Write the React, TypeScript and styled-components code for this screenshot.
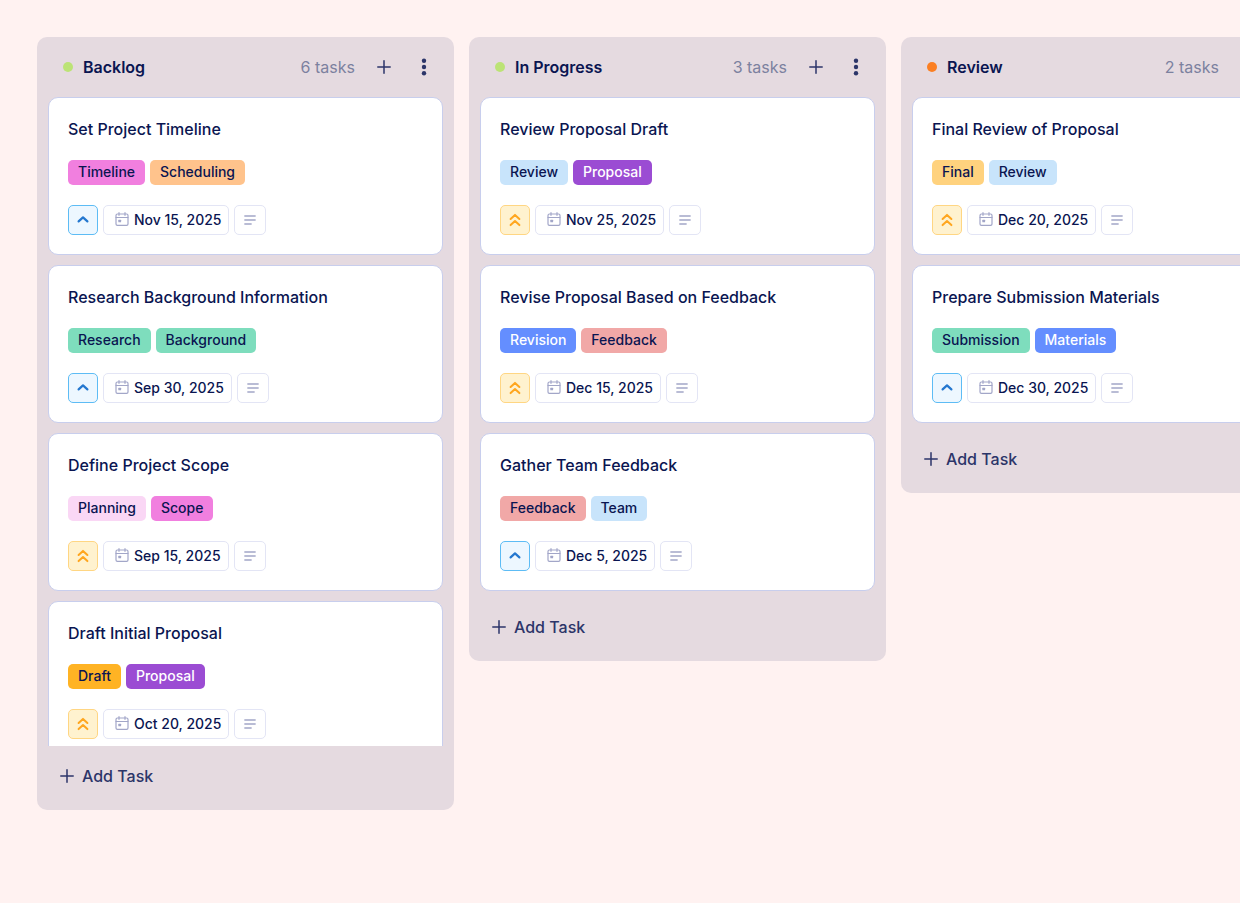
import React from "react";
import styled, { createGlobalStyle } from "styled-components";

const GlobalStyle = createGlobalStyle`
  *, *::before, *::after { box-sizing: border-box; }
  body {
    margin: 0;
    background: #fff2f1;
    color: #0a1551;
    font-family: Inter, "Liberation Sans", sans-serif;
    -webkit-font-smoothing: antialiased;
  }
  button { font: inherit; color: inherit; cursor: pointer; }
  h2, h3, ul { margin: 0; padding: 0; }
`;

type Priority = "medium" | "high";

const tagColors = {
  pink: ["#f17fdf", "#0a1551"],
  peach: ["#ffc38c", "#0a1551"],
  green: ["#7eddbd", "#0a1551"],
  blush: ["#fad7f5", "#0a1551"],
  amber: ["#ffb324", "#0a1551"],
  gold: ["#ffd27e", "#0a1551"],
  sky: ["#c8e4fb", "#0a1551"],
  coral: ["#f1a8a7", "#0a1551"],
  purple: ["#9b4cd3", "#ffffff"],
  blue: ["#648eff", "#ffffff"],
} as const;

type TagColor = keyof typeof tagColors;

interface Task {
  title: string;
  tags: [string, TagColor][];
  priority: Priority;
  due: string;
}

interface ColumnData {
  name: string;
  dot: string;
  count: number;
  tasks: Task[];
}

const columns: ColumnData[] = [
  {
    name: "Backlog",
    dot: "#bce376",
    count: 6,
    tasks: [
      { title: "Set Project Timeline", tags: [["Timeline", "pink"], ["Scheduling", "peach"]], priority: "medium", due: "Nov 15, 2025" },
      { title: "Research Background Information", tags: [["Research", "green"], ["Background", "green"]], priority: "medium", due: "Sep 30, 2025" },
      { title: "Define Project Scope", tags: [["Planning", "blush"], ["Scope", "pink"]], priority: "high", due: "Sep 15, 2025" },
      { title: "Draft Initial Proposal", tags: [["Draft", "amber"], ["Proposal", "purple"]], priority: "high", due: "Oct 20, 2025" },
    ],
  },
  {
    name: "In Progress",
    dot: "#bce376",
    count: 3,
    tasks: [
      { title: "Review Proposal Draft", tags: [["Review", "sky"], ["Proposal", "purple"]], priority: "high", due: "Nov 25, 2025" },
      { title: "Revise Proposal Based on Feedback", tags: [["Revision", "blue"], ["Feedback", "coral"]], priority: "high", due: "Dec 15, 2025" },
      { title: "Gather Team Feedback", tags: [["Feedback", "coral"], ["Team", "sky"]], priority: "medium", due: "Dec 5, 2025" },
    ],
  },
  {
    name: "Review",
    dot: "#fb7f23",
    count: 2,
    tasks: [
      { title: "Final Review of Proposal", tags: [["Final", "gold"], ["Review", "sky"]], priority: "high", due: "Dec 20, 2025" },
      { title: "Prepare Submission Materials", tags: [["Submission", "green"], ["Materials", "blue"]], priority: "medium", due: "Dec 30, 2025" },
    ],
  },
];

const Board = styled.main`
  display: flex;
  align-items: flex-start;
  gap: 15px;
  min-height: 100vh;
  padding: 37px;
  overflow-x: auto;
  scrollbar-width: none;
`;

const Column = styled.section`
  display: flex;
  flex-direction: column;
  flex: none;
  width: 417px;
  border-radius: 10px;
  background: #e5dae0;
`;

const ColumnHeader = styled.header`
  display: flex;
  align-items: center;
  height: 60px;
  padding: 0 15px 0 26px;
`;

const Dot = styled.span<{ $color: string }>`
  width: 10px;
  height: 10px;
  margin-right: 10px;
  border-radius: 50%;
  background: ${(p) => p.$color};
`;

const ColumnTitle = styled.h2`
  flex: 1;
  font-size: 16px;
  line-height: 24px;
  font-weight: 600;
`;

const Count = styled.span`
  margin-right: 14px;
  font-size: 16px;
  line-height: 24px;
  color: #7c819f;
`;

const HeaderActions = styled.div`
  display: flex;
  gap: 10px;
`;

const IconButton = styled.button`
  display: grid;
  place-items: center;
  width: 30px;
  height: 30px;
  padding: 0;
  border: 0;
  border-radius: 4px;
  background: transparent;
  color: #2c3569;
`;

const CardList = styled.ul`
  display: flex;
  flex-direction: column;
  gap: 10px;
  max-height: calc(100vh - 254px);
  padding: 0 11px 6px;
  overflow-y: auto;
  scrollbar-width: none;
  list-style: none;
`;

const Card = styled.li`
  display: flex;
  flex-direction: column;
  flex: none;
  gap: 20px;
  padding: 20px 19px 19px;
  border: 1px solid #c8ceed;
  border-radius: 10px;
  background: #ffffff;
`;

const CardTitle = styled.h3`
  font-size: 16px;
  line-height: 22px;
  font-weight: 500;
`;

const Row = styled.div`
  display: flex;
  gap: 5px;
`;

const Tag = styled.span<{ $color: TagColor }>`
  padding: 0 10px 1px;
  border-radius: 5px;
  font-size: 14px;
  line-height: 24px;
  font-weight: 500;
  background: ${(p) => tagColors[p.$color][0]};
  color: ${(p) => tagColors[p.$color][1]};
`;

const Chip = styled.button`
  display: flex;
  align-items: center;
  justify-content: center;
  gap: 5px;
  height: 30px;
  padding: 0 7px;
  border: 1px solid #e3e5f5;
  border-radius: 5px;
  background: #ffffff;
  color: #a2a6c8;
`;

const PriorityChip = styled(Chip)<{ $level: Priority }>`
  width: 30px;
  padding: 0;
  border-color: ${(p) => (p.$level === "high" ? "#ffd683" : "#5dbcf5")};
  background: ${(p) => (p.$level === "high" ? "#fff2cf" : "#edf7ff")};
  color: ${(p) => (p.$level === "high" ? "#ffa61f" : "#2477cf")};
`;

const DateChip = styled(Chip)`
  padding-left: 11px;
`;

const DateText = styled.span`
  font-size: 14px;
  line-height: 20px;
  font-weight: 500;
  color: #0a1551;
`;

const NotesChip = styled(Chip)`
  width: 32px;
`;

const ColumnFooter = styled.footer`
  padding: 10px 11px 14px;
`;

const AddTask = styled.button`
  display: flex;
  align-items: center;
  gap: 8px;
  height: 40px;
  padding: 0 12px;
  border: 0;
  background: transparent;
  color: #2c3569;
  font-size: 16px;
  line-height: 24px;
  font-weight: 500;
`;

const PlusIcon = () => (
  <svg width="14" height="14" viewBox="0 0 14 14" fill="none" stroke="currentColor" strokeWidth="1.5" strokeLinecap="round" aria-hidden="true">
    <path d="M7 .8v12.4M.8 7h12.4" />
  </svg>
);

const MoreIcon = () => (
  <svg width="6" height="18" viewBox="0 0 6 18" fill="currentColor" aria-hidden="true">
    <circle cx="3" cy="2.8" r="2.2" />
    <circle cx="3" cy="9" r="2.2" />
    <circle cx="3" cy="15.2" r="2.2" />
  </svg>
);

const PriorityIcon = ({ level }: { level: Priority }) => (
  <svg width="14" height="14" viewBox="0 0 14 14" fill="none" stroke="currentColor" strokeWidth="2" strokeLinecap="round" strokeLinejoin="round" aria-hidden="true">
    {level === "high" ? <path d="M2.6 6 7 1.9 11.4 6M2.6 12.1 7 8l4.4 4.1" /> : <path d="M2.6 8.4 7 4.4l4.4 4" strokeWidth="2.2" />}
  </svg>
);

const CalendarIcon = () => (
  <svg width="14" height="16" viewBox="0 0 14 16" fill="none" stroke="currentColor" strokeWidth="1.2" strokeLinecap="round" aria-hidden="true">
    <rect x="1" y="2" width="12" height="11.4" rx="1.4" />
    <path d="M1 5.5h12M4 .7v2.6M10 .7v2.6" />
    <rect x="3.3" y="7.8" width="2.8" height="2.4" rx=".5" fill="currentColor" stroke="none" />
  </svg>
);

const NotesIcon = () => (
  <svg width="12" height="10" viewBox="0 0 12 10" fill="none" stroke="currentColor" strokeWidth="1.3" strokeLinecap="round" aria-hidden="true">
    <path d="M.8 1h10.4M.8 5h10.4M.8 9h6.4" />
  </svg>
);

const TaskCard = ({ task }: { task: Task }) => (
  <Card>
    <CardTitle>{task.title}</CardTitle>
    <Row>
      {task.tags.map(([label, color]) => (
        <Tag key={label} $color={color}>{label}</Tag>
      ))}
    </Row>
    <Row>
      <PriorityChip type="button" $level={task.priority}>
        <PriorityIcon level={task.priority} />
      </PriorityChip>
      <DateChip type="button">
        <CalendarIcon />
        <DateText>{task.due}</DateText>
      </DateChip>
      <NotesChip type="button">
        <NotesIcon />
      </NotesChip>
    </Row>
  </Card>
);

export default function App() {
  return (
    <>
      <GlobalStyle />
      <Board>
        {columns.map((column) => (
          <Column key={column.name}>
            <ColumnHeader>
              <Dot $color={column.dot} />
              <ColumnTitle>{column.name}</ColumnTitle>
              <Count>{column.count} tasks</Count>
              <HeaderActions>
                <IconButton type="button"><PlusIcon /></IconButton>
                <IconButton type="button"><MoreIcon /></IconButton>
              </HeaderActions>
            </ColumnHeader>
            <CardList>
              {column.tasks.map((task) => (
                <TaskCard key={task.title} task={task} />
              ))}
            </CardList>
            <ColumnFooter>
              <AddTask type="button">
                <PlusIcon />
                Add Task
              </AddTask>
            </ColumnFooter>
          </Column>
        ))}
      </Board>
    </>
  );
}
